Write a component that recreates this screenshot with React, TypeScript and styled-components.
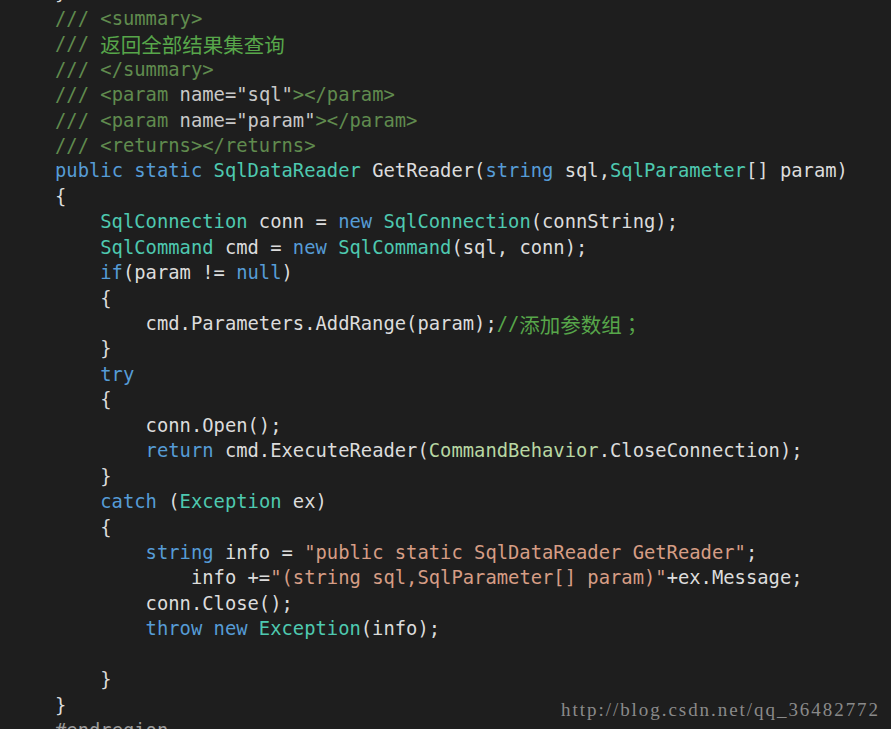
import React from "react";
import styled, { createGlobalStyle } from "styled-components";

const GlobalStyle = createGlobalStyle`
  html, body {
    margin: 0;
    padding: 0;
    background: #1e1e1e;
    overflow: hidden;
  }
`;

type Kind =
  | "plain"
  | "kw"
  | "type"
  | "str"
  | "cmt"
  | "doc"
  | "docText"
  | "docAttr"
  | "enum"
  | "pre";

type Cjk = "sc" | "jp";

const colors: Record<Kind, string> = {
  plain: "#dcdcdc",
  kw: "#569cd6",
  type: "#4ec9b0",
  str: "#d69d85",
  cmt: "#57a64a",
  doc: "#608b4e",
  docText: "#57a64a",
  docAttr: "#c8c8c8",
  enum: "#b8d7a3",
  pre: "#9b9b9b",
};

const cjkFonts: Record<Cjk, string> = {
  sc: `"Noto Sans CJK SC", sans-serif`,
  jp: `"Noto Sans CJK JP", "Noto Sans CJK SC", sans-serif`,
};

const Editor = styled.div`
  position: relative;
  width: 891px;
  height: 729px;
  overflow: hidden;
  background: #1e1e1e;
`;

const Code = styled.div`
  display: flex;
  flex-direction: column;
  margin-top: -19px;
  padding-left: 55px;
  font-family: "DejaVu Sans Mono", "Liberation Mono", "Noto Sans CJK SC", monospace;
  font-size: 18.82px;
  color: #dcdcdc;
`;

const Line = styled.div<{ $indent: number }>`
  display: flex;
  align-items: center;
  height: 25.45px;
  padding-left: ${(p) => p.$indent * 4}ch;
  white-space: pre;
`;

const Token = styled.span<{ $kind: Kind; $cjk?: Cjk }>`
  color: ${(p) => colors[p.$kind]};
  font-family: ${(p) => (p.$cjk ? cjkFonts[p.$cjk] : "inherit")};
  font-size: ${(p) => (p.$cjk ? "20.5px" : "inherit")};
  line-height: 1;
`;

const Watermark = styled.div`
  position: absolute;
  right: 11px;
  bottom: 8px;
  font-family: "Liberation Serif", "DejaVu Serif", serif;
  font-size: 19px;
  letter-spacing: 1.95px;
  color: #8a8a8a;
  white-space: nowrap;
`;

type Tok = [Kind, string, Cjk?];
type LineDef = { indent: number; toks: Tok[] };

const lines: LineDef[] = [
  { indent: 0, toks: [["plain", "}"]] },
  { indent: 0, toks: [["doc", "/// <summary>"]] },
  { indent: 0, toks: [["doc", "/// "], ["docText", "返回全部结果集查询", "sc"]] },
  { indent: 0, toks: [["doc", "/// </summary>"]] },
  {
    indent: 0,
    toks: [
      ["doc", "/// <param "],
      ["docAttr", 'name="sql"'],
      ["doc", "></param>"],
    ],
  },
  {
    indent: 0,
    toks: [
      ["doc", "/// <param "],
      ["docAttr", 'name="param"'],
      ["doc", "></param>"],
    ],
  },
  { indent: 0, toks: [["doc", "/// <returns></returns>"]] },
  {
    indent: 0,
    toks: [
      ["kw", "public static "],
      ["type", "SqlDataReader"],
      ["plain", " GetReader("],
      ["kw", "string"],
      ["plain", " sql,"],
      ["type", "SqlParameter"],
      ["plain", "[] param)"],
    ],
  },
  { indent: 0, toks: [["plain", "{"]] },
  {
    indent: 1,
    toks: [
      ["type", "SqlConnection"],
      ["plain", " conn = "],
      ["kw", "new "],
      ["type", "SqlConnection"],
      ["plain", "(connString);"],
    ],
  },
  {
    indent: 1,
    toks: [
      ["type", "SqlCommand"],
      ["plain", " cmd = "],
      ["kw", "new "],
      ["type", "SqlCommand"],
      ["plain", "(sql, conn);"],
    ],
  },
  {
    indent: 1,
    toks: [
      ["kw", "if"],
      ["plain", "(param != "],
      ["kw", "null"],
      ["plain", ")"],
    ],
  },
  { indent: 1, toks: [["plain", "{"]] },
  {
    indent: 2,
    toks: [
      ["plain", "cmd.Parameters.AddRange(param);"],
      ["cmt", "//"],
      ["cmt", "添加参数组", "sc"],
      ["cmt", "；", "jp"],
    ],
  },
  { indent: 1, toks: [["plain", "}"]] },
  { indent: 1, toks: [["kw", "try"]] },
  { indent: 1, toks: [["plain", "{"]] },
  { indent: 2, toks: [["plain", "conn.Open();"]] },
  {
    indent: 2,
    toks: [
      ["kw", "return"],
      ["plain", " cmd.ExecuteReader("],
      ["enum", "CommandBehavior"],
      ["plain", ".CloseConnection);"],
    ],
  },
  { indent: 1, toks: [["plain", "}"]] },
  {
    indent: 1,
    toks: [
      ["kw", "catch"],
      ["plain", " ("],
      ["type", "Exception"],
      ["plain", " ex)"],
    ],
  },
  { indent: 1, toks: [["plain", "{"]] },
  {
    indent: 2,
    toks: [
      ["kw", "string"],
      ["plain", " info = "],
      ["str", '"public static SqlDataReader GetReader"'],
      ["plain", ";"],
    ],
  },
  {
    indent: 3,
    toks: [
      ["plain", "info +="],
      ["str", '"(string sql,SqlParameter[] param)"'],
      ["plain", "+ex.Message;"],
    ],
  },
  { indent: 2, toks: [["plain", "conn.Close();"]] },
  {
    indent: 2,
    toks: [
      ["kw", "throw new "],
      ["type", "Exception"],
      ["plain", "(info);"],
    ],
  },
  { indent: 0, toks: [] },
  { indent: 1, toks: [["plain", "}"]] },
  { indent: 0, toks: [["plain", "}"]] },
  { indent: 0, toks: [["pre", "#endregion"]] },
];

export default function App() {
  return (
    <Editor>
      <GlobalStyle />
      <Code>
        {lines.map((l, i) => (
          <Line key={i} $indent={l.indent}>
            {l.toks.map(([k, t, cjk], j) => (
              <Token key={j} $kind={k} $cjk={cjk}>
                {t}
              </Token>
            ))}
          </Line>
        ))}
      </Code>
      <Watermark>http://blog.csdn.net/qq_36482772</Watermark>
    </Editor>
  );
}
